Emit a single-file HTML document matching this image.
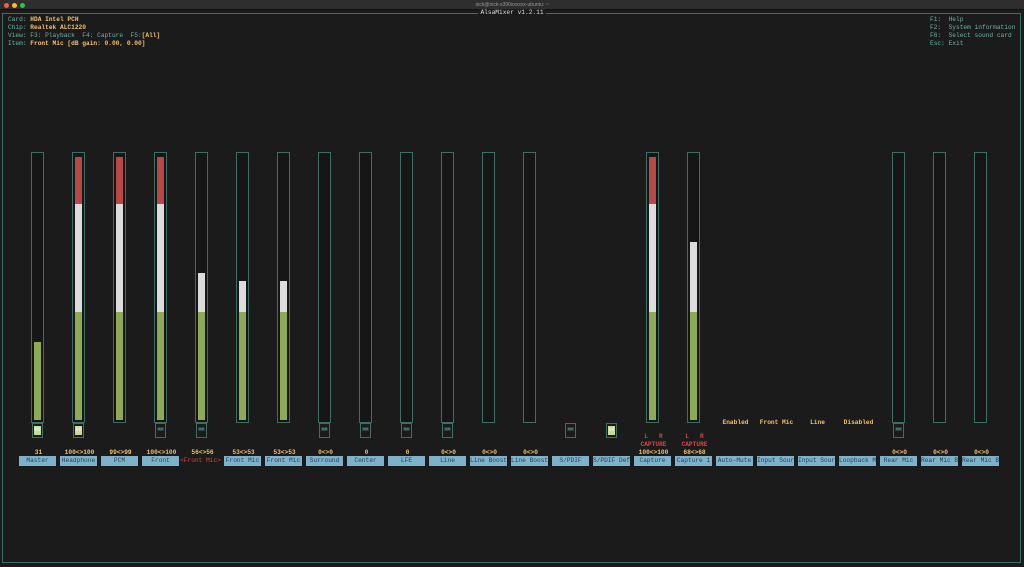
<!DOCTYPE html>
<html><head><meta charset="utf-8"><style>
*{margin:0;padding:0;box-sizing:border-box}
body{width:1024px;height:567px;background:#1b1b1b;position:relative;overflow:hidden;font-family:"Liberation Mono",monospace;font-size:6.2px;line-height:8px}
.tb{position:absolute;left:0;top:0;width:1024px;height:10px;background:#2e2e2e;border-bottom:1px solid #111}
.dot{position:absolute;top:3px;width:5px;height:5px;border-radius:50%}
.win{position:absolute;left:2px;top:13px;right:3px;bottom:4px;border:1px solid #3e6f66}
.title{position:absolute;top:9px;left:0;width:1024px;text-align:center}
.title span{background:#1b1b1b;color:#ddd;padding:0 2px}
.t{position:absolute;white-space:pre;color:#6fb3a8}
.y{color:#f0c070;font-weight:bold}
.box{position:absolute;top:152px;width:13px;height:271px;border:1px solid #3e6f66;background:#161616}
.f{position:absolute;left:2px;width:7px}
.r{background:#b84848}.w{background:#dcdcdc}.g{background:#8faa55}
.m{position:absolute;top:423px;width:11px;height:15px;border:1px solid #3e6f66;color:#6fb3a8;font-size:5px;text-align:center;line-height:13px}
.m i{display:block;margin:2px 1px;height:9px;background:#c8dc9a;color:#f4f4f4;font-style:normal;line-height:9px;font-size:5px}
.v{position:absolute;top:449px;width:41px;text-align:center;color:#f0c070;font-weight:bold}
.l{position:absolute;top:456px;width:37px;height:10px;background:#7db2ca;color:#1f3f55;text-align:center;line-height:10px;overflow:hidden;white-space:pre}
.cap{position:absolute;width:41px;text-align:center;color:#d04848;font-weight:bold;white-space:pre}
.e{position:absolute;top:419px;width:41px;text-align:center;color:#f0c070;font-weight:bold}
</style></head><body>
<div class="tb"><div class="dot" style="left:4px;background:#f25f57"></div><div class="dot" style="left:12px;background:#fbbc2e"></div><div class="dot" style="left:20px;background:#29c840"></div>
<div style="position:absolute;left:0;width:1024px;top:1px;text-align:center;color:#999;font-size:5px;line-height:8px;font-family:'Liberation Sans',sans-serif">nick@nick-x390xxxxxx-ubuntu: ~</div></div>
<div class="win"></div>
<div class="title"><span>AlsaMixer v1.2.11</span></div>
<div class="t" style="left:8px;top:16px">Card: <span class="y">HDA Intel PCH</span>
Chip: <span class="y">Realtek ALC1220</span>
View: F3: Playback  F4: Capture  F5:<span class="y">[All]</span>
Item: <span class="y">Front Mic [dB gain: 0.00, 0.00]</span></div>
<div class="t" style="left:930px;top:16px">F1:  Help
F2:  System information
F6:  Select sound card
Esc: Exit</div>

<div class="box" style="left:31px"><div class="f g" style="top:189px;bottom:2px"></div></div>
<div class="box" style="left:72px"><div class="f r" style="top:4px;height:47px"></div><div class="f w" style="top:51px;height:108px"></div><div class="f g" style="top:159px;bottom:2px"></div></div>
<div class="box" style="left:113px"><div class="f r" style="top:4px;height:47px"></div><div class="f w" style="top:51px;height:108px"></div><div class="f g" style="top:159px;bottom:2px"></div></div>
<div class="box" style="left:154px"><div class="f r" style="top:4px;height:47px"></div><div class="f w" style="top:51px;height:108px"></div><div class="f g" style="top:159px;bottom:2px"></div></div>
<div class="box" style="left:195px"><div class="f w" style="top:120px;height:39px"></div><div class="f g" style="top:159px;bottom:2px"></div></div>
<div class="box" style="left:236px"><div class="f w" style="top:128px;height:31px"></div><div class="f g" style="top:159px;bottom:2px"></div></div>
<div class="box" style="left:277px"><div class="f w" style="top:128px;height:31px"></div><div class="f g" style="top:159px;bottom:2px"></div></div>
<div class="box" style="left:318px"></div>
<div class="box" style="left:359px"></div>
<div class="box" style="left:400px"></div>
<div class="box" style="left:441px"></div>
<div class="box" style="left:482px"></div>
<div class="box" style="left:523px"></div>
<div class="box" style="left:646px"><div class="f r" style="top:4px;height:47px"></div><div class="f w" style="top:51px;height:108px"></div><div class="f g" style="top:159px;bottom:2px"></div></div>
<div class="box" style="left:687px"><div class="f w" style="top:89px;height:70px"></div><div class="f g" style="top:159px;bottom:2px"></div></div>
<div class="box" style="left:892px"></div>
<div class="box" style="left:933px"></div>
<div class="box" style="left:974px"></div>

<div class="m" style="left:32px"><i>00</i></div>
<div class="m" style="left:73px"><i>00</i></div>
<div class="m" style="left:155px">MM</div>
<div class="m" style="left:196px">MM</div>
<div class="m" style="left:319px">MM</div>
<div class="m" style="left:360px">MM</div>
<div class="m" style="left:401px">MM</div>
<div class="m" style="left:442px">MM</div>
<div class="m" style="left:565px">MM</div>
<div class="m" style="left:606px"><i>00</i></div>
<div class="m" style="left:893px">MM</div>

<div class="e" style="left:715px">Enabled</div>
<div class="e" style="left:756px">Front Mic</div>
<div class="e" style="left:797px">Line</div>
<div class="e" style="left:838px">Disabled</div>

<div class="cap" style="left:633px;top:433px">L   R</div>
<div class="cap" style="left:633px;top:441px">CAPTURE</div>
<div class="cap" style="left:674px;top:433px">L   R</div>
<div class="cap" style="left:674px;top:441px">CAPTURE</div>

<div class="v" style="left:18px">31</div>
<div class="v" style="left:59px">100&lt;&gt;100</div>
<div class="v" style="left:100px">99&lt;&gt;99</div>
<div class="v" style="left:141px">100&lt;&gt;100</div>
<div class="v" style="left:182px">56&lt;&gt;56</div>
<div class="v" style="left:223px">53&lt;&gt;53</div>
<div class="v" style="left:264px">53&lt;&gt;53</div>
<div class="v" style="left:305px">0&lt;&gt;0</div>
<div class="v" style="left:346px">0</div>
<div class="v" style="left:387px">0</div>
<div class="v" style="left:428px">0&lt;&gt;0</div>
<div class="v" style="left:469px">0&lt;&gt;0</div>
<div class="v" style="left:510px">0&lt;&gt;0</div>
<div class="v" style="left:633px">100&lt;&gt;100</div>
<div class="v" style="left:674px">68&lt;&gt;68</div>
<div class="v" style="left:879px">0&lt;&gt;0</div>
<div class="v" style="left:920px">0&lt;&gt;0</div>
<div class="v" style="left:961px">0&lt;&gt;0</div>

<div class="l" style="left:19px">Master</div>
<div class="l" style="left:60px">Headphone</div>
<div class="l" style="left:101px">PCM</div>
<div class="l" style="left:142px">Front</div>
<div class="l" style="left:180px;width:41px;background:#1b1b1b;color:#d04848">&lt;Front Mic&gt;</div>
<div class="l" style="left:224px">Front Mic</div>
<div class="l" style="left:265px">Front Mic</div>
<div class="l" style="left:306px">Surround</div>
<div class="l" style="left:347px">Center</div>
<div class="l" style="left:388px">LFE</div>
<div class="l" style="left:429px">Line</div>
<div class="l" style="left:470px">Line Boost</div>
<div class="l" style="left:511px">Line Boost</div>
<div class="l" style="left:552px">S/PDIF</div>
<div class="l" style="left:593px">S/PDIF Def</div>
<div class="l" style="left:634px">Capture</div>
<div class="l" style="left:675px">Capture 1</div>
<div class="l" style="left:716px">Auto-Mute</div>
<div class="l" style="left:757px">Input Sour</div>
<div class="l" style="left:798px">Input Sour</div>
<div class="l" style="left:839px">Loopback M</div>
<div class="l" style="left:880px">Rear Mic</div>
<div class="l" style="left:921px">Rear Mic B</div>
<div class="l" style="left:962px">Rear Mic B</div>
</body></html>
